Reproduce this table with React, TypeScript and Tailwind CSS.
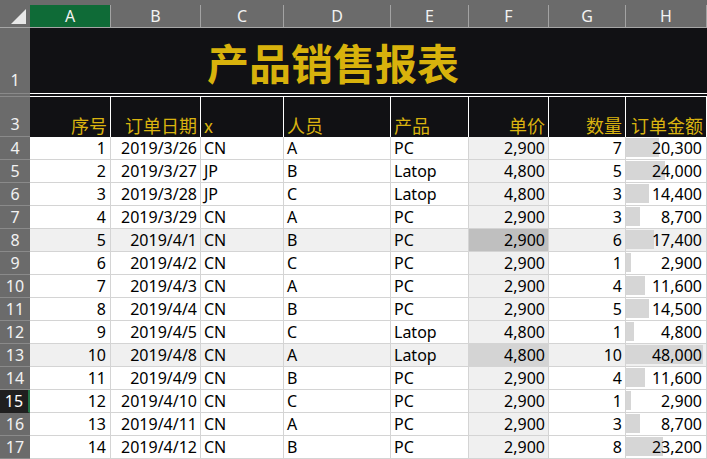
import React from "react";

type Row = [number, string, string, string, string, number, number, number];

const rows: Row[] = [
  [1, "2019/3/26", "CN", "A", "PC", 2900, 7, 20300],
  [2, "2019/3/27", "JP", "B", "Latop", 4800, 5, 24000],
  [3, "2019/3/28", "JP", "C", "Latop", 4800, 3, 14400],
  [4, "2019/3/29", "CN", "A", "PC", 2900, 3, 8700],
  [5, "2019/4/1", "CN", "B", "PC", 2900, 6, 17400],
  [6, "2019/4/2", "CN", "C", "PC", 2900, 1, 2900],
  [7, "2019/4/3", "CN", "A", "PC", 2900, 4, 11600],
  [8, "2019/4/4", "CN", "B", "PC", 2900, 5, 14500],
  [9, "2019/4/5", "CN", "C", "Latop", 4800, 1, 4800],
  [10, "2019/4/8", "CN", "A", "Latop", 4800, 10, 48000],
  [11, "2019/4/9", "CN", "B", "PC", 2900, 4, 11600],
  [12, "2019/4/10", "CN", "C", "PC", 2900, 1, 2900],
  [13, "2019/4/11", "CN", "A", "PC", 2900, 3, 8700],
  [14, "2019/4/12", "CN", "B", "PC", 2900, 8, 23200],
];

// column widths, right gridline included
const W = ["w-[81px]", "w-[90px]", "w-[83px]", "w-[107px]", "w-[78px]", "w-[80px]", "w-[77px]", "w-[81px]"];
const letters = ["A", "B", "C", "D", "E", "F", "G", "H"];
const heads = ["序号", "订单日期", "x", "人员", "产品", "单价", "数量", "订单金额"];
const headRight = [true, true, false, false, false, true, true, true];

const fmt = (n: number) => n.toLocaleString("en-US");

function RowHead({ n, className = "" }: { n: number; className?: string }) {
  return (
    <div className={`w-[30px] shrink-0 flex justify-center border-b border-[#8a8a8a] text-[16px] text-[#f2f2f2] ${className}`}>
      {n}
    </div>
  );
}

export default function App() {
  const max = 48000;
  return (
    <div className="w-[707px] h-[459px] overflow-hidden bg-[#6b6b6b] pt-[5px] font-['Noto_Sans','Noto_Sans_CJK_SC',sans-serif]">
      {/* column letters */}
      <div className="flex h-[23px] border-b border-[#a6a6a6]">
        <div className="w-[30px] shrink-0 relative">
          <svg width="30" height="22" className="absolute left-0 top-0">
            <polygon points="26,4 26,19 11,19" fill="#e8e8e8" />
          </svg>
        </div>
        {letters.map((l, i) => (
          <div
            key={l}
            className={`${W[i]} shrink-0 flex items-center justify-center border-r border-[#a3a3a3] text-[16px] leading-none text-[#f2f2f2] ${i === 0 ? "bg-[#0f6b37]" : ""}`}
          >
            {l}
          </div>
        ))}
      </div>

      {/* row 1 title */}
      <div className="flex h-[65px]">
        <div className="w-[30px] shrink-0 flex justify-center items-end text-[16px] text-[#f2f2f2] pb-[1px]">1</div>
        <div className="flex-1 bg-[#111114] flex items-center pl-[177px] pt-[3px]">
          <span className="text-[42px] font-bold leading-none text-[#d8b20c] font-['Noto_Sans_CJK_SC',sans-serif]">产品销售报表</span>
        </div>
      </div>

      {/* row 2 (hidden) double line */}
      <div className="flex h-[4px]">
        <div className="w-[30px] shrink-0 border-t border-b border-[#8a8a8a]" />
        <div className="flex-1 bg-[#111114] border-t border-b border-white" />
      </div>

      {/* row 3 headers */}
      <div className="flex h-[40px]">
        <div className="w-[30px] shrink-0 flex justify-center items-end text-[16px] text-[#f2f2f2] border-b border-[#8a8a8a]">3</div>
        {heads.map((h, i) => (
          <div
            key={h}
            className={`${W[i]} shrink-0 bg-[#111114] border-r border-white flex items-end pb-[1px] text-[18px] leading-[22px] text-[#d9b30f] font-['Noto_Sans_CJK_SC',sans-serif] ${headRight[i] ? "justify-end pr-[3px]" : "justify-start pl-[3px]"} ${i === 7 ? "pr-[1px]" : ""}`}
          >
            {h}
          </div>
        ))}
      </div>

      {/* data rows */}
      {rows.map((r, idx) => {
        const hl = r[0] === 5 || r[0] === 10;
        const fBg = r[0] === 5 ? "bg-[#bfbfbf]" : r[0] === 10 ? "bg-[#d4d4d4]" : "bg-[#f0f0f0]";
        const rowBg = hl ? "bg-[#f0f0f0]" : "bg-white";
        const cell = "shrink-0 h-full border-r border-b border-[#d4d4d4] flex items-center text-[16px] text-black leading-none";
        const sel = r[0] === 12;
        return (
          <div key={idx} className="flex h-[23px]">
            <div
              className={`w-[30px] shrink-0 flex items-center justify-center border-b text-[16px] ${sel ? "bg-[#1f1f1f] border-[#1f1f1f] border-r-2 border-r-[#217346] text-white" : "border-[#8a8a8a] text-[#f2f2f2]"}`}
            >
              {idx + 4}
            </div>
            <div className={`${W[0]} ${cell} ${rowBg} justify-end pr-[4px]`}>{r[0]}</div>
            <div className={`${W[1]} ${cell} ${rowBg} justify-end pr-[3px]`}>{r[1]}</div>
            <div className={`${W[2]} ${cell} ${rowBg} pl-[3px]`}>{r[2]}</div>
            <div className={`${W[3]} ${cell} ${rowBg} pl-[3px]`}>{r[3]}</div>
            <div className={`${W[4]} ${cell} ${rowBg} pl-[3px]`}>{r[4]}</div>
            <div className={`${W[5]} ${cell} ${fBg} justify-end pr-[3px]`}>{fmt(r[5])}</div>
            <div className={`${W[6]} ${cell} ${rowBg} justify-end pr-[3px]`}>{r[6]}</div>
            <div className={`${W[7]} ${cell} ${rowBg} justify-end pr-[4px] relative`}>
              <div
                className="absolute left-0 top-[1px] bottom-[2px] bg-[#d6d6d6]"
                style={{ width: `${(77 * r[7]) / max}px` }}
              />
              <span className="relative">{fmt(r[7])}</span>
            </div>
          </div>
        );
      })}
    </div>
  );
}
